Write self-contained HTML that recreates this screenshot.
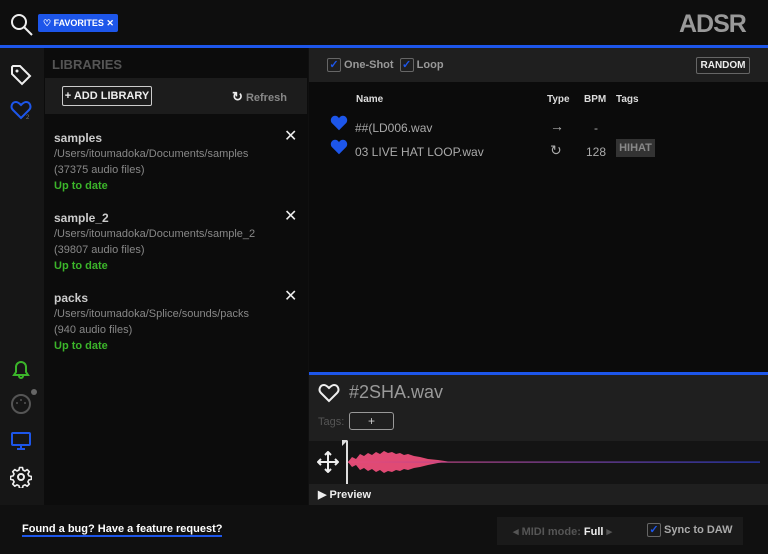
<!DOCTYPE html><html><head><style>
*{margin:0;padding:0;box-sizing:border-box}
body{width:768px;height:554px;background:#101010;font-family:"Liberation Sans",sans-serif;position:relative;overflow:hidden;color:#ddd}
.a{position:absolute;white-space:nowrap}
.b{font-weight:bold}
.cb{display:inline-block;width:14px;height:14px;border:1px solid #666;border-radius:2px;color:#1d56ea;text-align:center;font-size:11px;line-height:12px;vertical-align:middle}
</style></head><body>
<div class="a" style="left:0;top:0;width:768px;height:45px;background:#0e0e0e"></div>
<div class="a" style="left:0;top:45px;width:768px;height:3px;background:#1d56ea"></div>
<svg class="a" style="left:10px;top:13px" width="24" height="24" viewBox="0 0 24 24"><circle cx="9" cy="9" r="7" fill="none" stroke="#eee" stroke-width="2"/><path d="M14 14l8 8" stroke="#eee" stroke-width="2"/></svg>
<div class="a b" style="left:38px;top:14px;width:80px;height:18px;background:#1d56ea;border-radius:2px;color:#fff;font-size:9px;line-height:18px;padding-left:5px">♡ FAVORITES ✕</div>
<div class="a b" style="left:679px;top:10px;font-size:25px;color:#999;letter-spacing:-1px">ADSR</div>
<!-- left rail -->
<div class="a" style="left:0;top:48px;width:44px;height:457px;background:#161616"></div>
<svg class="a" style="left:10px;top:64px" width="22" height="22" viewBox="0 0 22 22"><path d="M2 3v7l10 10 8-8L10 2H3z" fill="none" stroke="#eee" stroke-width="2"/><circle cx="7" cy="7" r="1.5" fill="#eee"/></svg>
<svg class="a" style="left:10px;top:100px" width="22" height="20" viewBox="0 0 22 20"><path d="M11 18L3 10C0 7 2 2 6 2c2 0 4 2 5 3 1-1 3-3 5-3 4 0 6 5 3 8z" fill="none" stroke="#1d56ea" stroke-width="2"/></svg>
<div class="a" style="left:26px;top:115px;font-size:6px;color:#777">2</div>
<svg class="a" style="left:10px;top:358px" width="22" height="22" viewBox="0 0 22 22"><path d="M4 17h14l-2-3V9a5 5 0 0 0-10 0v5z M9 18a2 2 0 0 0 4 0" fill="none" stroke="#3bb52a" stroke-width="2"/></svg>
<svg class="a" style="left:10px;top:393px" width="22" height="22"><circle cx="11" cy="11" r="9" fill="none" stroke="#555" stroke-width="2"/><circle cx="7" cy="10" r="1" fill="#555"/><circle cx="11" cy="7" r="1" fill="#555"/><circle cx="15" cy="10" r="1" fill="#555"/></svg>
<div class="a" style="left:31px;top:389px;width:6px;height:6px;border-radius:3px;background:#666"></div>
<svg class="a" style="left:10px;top:431px" width="22" height="20" viewBox="0 0 22 20"><rect x="2" y="2" width="18" height="12" rx="1" fill="none" stroke="#1d56ea" stroke-width="2"/><path d="M11 14v3M7 18h8" stroke="#1d56ea" stroke-width="2"/></svg>
<svg class="a" style="left:10px;top:466px" width="22" height="22" viewBox="0 0 22 22"><circle cx="11" cy="11" r="3" fill="none" stroke="#eee" stroke-width="2"/><path d="M9.5 1.5h3l.5 2.5 2 1 2.2-1.4 2.1 2.1-1.4 2.2 1 2 2.5.5v3l-2.5.5-1 2 1.4 2.2-2.1 2.1-2.2-1.4-2 1-.5 2.5h-3l-.5-2.5-2-1-2.2 1.4-2.1-2.1 1.4-2.2-1-2-2.5-.5v-3l2.5-.5 1-2-1.4-2.2 2.1-2.1 2.2 1.4 2-1z" fill="none" stroke="#eee" stroke-width="1.6" stroke-linejoin="round"/></svg>
<!-- libraries -->
<div class="a" style="left:44px;top:48px;width:264px;height:457px;background:#0c0c0c"></div>
<div class="a b" style="left:52px;top:57px;font-size:13px;color:#555">LIBRARIES</div>
<div class="a" style="left:45px;top:78px;width:262px;height:36px;background:#1c1c1c"></div>
<div class="a b" style="left:62px;top:86px;width:90px;height:20px;border:1px solid #ccc;border-radius:2px;font-size:11px;line-height:18px;color:#eee;text-align:center">+ ADD LIBRARY</div>
<div class="a b" style="left:232px;top:89px;font-size:11px;color:#888"><span style="color:#eee;font-size:13px">↻</span> Refresh</div>
<div class="a" style="left:54px;top:130px;font-size:11px;line-height:16px;color:#888">
<div class="b" style="color:#ccc;font-size:12px">samples</div><div>/Users/itoumadoka/Documents/samples</div><div>(37375 audio files)</div><div class="b" style="color:#3bb52a">Up to date</div>
<div class="b" style="color:#ccc;margin-top:16px;font-size:12px">sample_2</div><div>/Users/itoumadoka/Documents/sample_2</div><div>(39807 audio files)</div><div class="b" style="color:#3bb52a">Up to date</div>
<div class="b" style="color:#ccc;margin-top:16px;font-size:12px">packs</div><div>/Users/itoumadoka/Splice/sounds/packs</div><div>(940 audio files)</div><div class="b" style="color:#3bb52a">Up to date</div></div>
<div class="a" style="left:284px;top:126px;font-size:16px;color:#eee">✕</div>
<div class="a" style="left:284px;top:206px;font-size:16px;color:#eee">✕</div>
<div class="a" style="left:284px;top:286px;font-size:16px;color:#eee">✕</div>
<!-- right -->
<div class="a" style="left:309px;top:48px;width:459px;height:34px;background:#1f1f1f"></div>
<div class="a" style="left:309px;top:82px;width:459px;height:290px;background:#0b0b0b"></div>
<div class="a b" style="left:327px;top:58px;font-size:11px;color:#999;line-height:14px"><span class="cb">✓</span> One-Shot <span class="cb" style="margin-left:3px">✓</span> Loop</div>
<div class="a b" style="left:696px;top:57px;width:54px;height:17px;border:1px solid #666;border-radius:2px;font-size:10px;line-height:15px;text-align:center;color:#eee">RANDOM</div>
<div class="a b" style="left:356px;top:94px;font-size:10px;color:#ddd">Name</div>
<div class="a b" style="left:547px;top:94px;font-size:10px;color:#ddd">Type</div>
<div class="a b" style="left:584px;top:94px;font-size:10px;color:#ddd">BPM</div>
<div class="a b" style="left:616px;top:94px;font-size:10px;color:#ddd">Tags</div>
<svg class="a" style="left:330px;top:115px" width="18" height="16" viewBox="0 0 22 20"><path d="M11 19L2 10C-1 6 2 1 6 1c2 0 4 1 5 3 1-2 3-3 5-3 4 0 7 5 4 9z" fill="#1d56ea"/></svg>
<svg class="a" style="left:330px;top:139px" width="18" height="16" viewBox="0 0 22 20"><path d="M11 19L2 10C-1 6 2 1 6 1c2 0 4 1 5 3 1-2 3-3 5-3 4 0 7 5 4 9z" fill="#1d56ea"/></svg>
<div class="a" style="left:355px;top:116px;font-size:12px;color:#aaa;line-height:24px">##(LD006.wav<br>03 LIVE HAT LOOP.wav</div>
<div class="a" style="left:550px;top:114px;font-size:14px;color:#aaa;line-height:24px">→<br>↻</div>
<div class="a" style="left:584px;top:116px;font-size:12px;color:#aaa;line-height:24px;width:24px;text-align:center">-<br>128</div>
<div class="a b" style="left:616px;top:139px;width:39px;height:18px;background:#333;font-size:11px;line-height:18px;color:#888;text-align:center">HIHAT</div>
<div class="a" style="left:309px;top:372px;width:459px;height:3px;background:#1d56ea"></div>
<div class="a" style="left:309px;top:375px;width:459px;height:130px;background:#1f1f1f"></div>
<svg class="a" style="left:318px;top:383px" width="22" height="20" viewBox="0 0 22 20"><path d="M11 18L3 10C0 7 2 2 6 2c2 0 4 2 5 3 1-1 3-3 5-3 4 0 6 5 3 8z" fill="none" stroke="#eee" stroke-width="2"/></svg>
<div class="a" style="left:349px;top:382px;font-size:18px;color:#999">#2SHA.wav</div>
<div class="a" style="left:318px;top:416px;font-size:11px;color:#555">Tags:</div>
<div class="a" style="left:349px;top:412px;width:45px;height:18px;border:1px solid #999;border-radius:3px;text-align:center;font-size:12px;line-height:16px;color:#ccc">+</div>
<div class="a" style="left:309px;top:441px;width:459px;height:43px;background:#141414"></div>
<svg class="a" style="left:317px;top:451px" width="22" height="22" viewBox="0 0 22 22"><path d="M11 1v20M1 11h20M8 4l3-3 3 3M8 18l3 3 3-3M4 8l-3 3 3 3M18 8l3 3-3 3" fill="none" stroke="#eee" stroke-width="2"/></svg>
<div class="a" style="left:346px;top:441px;width:2px;height:43px;background:#ddd"></div>
<div class="a" style="left:342px;top:440px;width:0;height:0;border-left:6px solid #ddd;border-bottom:6px solid transparent"></div>
<svg class="a" style="left:348px;top:448px" width="412" height="30"><defs><linearGradient id="g"><stop offset="0" stop-color="#e84a78"/><stop offset="1" stop-color="#2a3cc8"/></linearGradient></defs><path d="M0 14L4 9 8 11 12 6 16 8 20 5 24 7 28 4 32 6 36 3 40 5 44 4 48 6 52 5 56 7 60 6 66 8 72 9 80 11 90 12 100 13.5 90 15 80 17 72 19 66 20 60 22 56 21 52 23 48 22 44 24 40 23 36 25 32 22 28 24 24 21 20 23 16 20 12 22 8 17 4 19z" fill="#e04a74"/><rect x="0" y="13.5" width="412" height="1.2" fill="url(#g)"/></svg>
<div class="a b" style="left:318px;top:488px;font-size:11px;color:#eee">▶ Preview</div>
<div class="a b" style="left:22px;top:523px;font-size:11px;color:#fff;border-bottom:2px solid #1d56ea;line-height:12px">Found a bug? Have a feature request?</div>
<div class="a" style="left:497px;top:517px;width:246px;height:28px;background:#1a1a1a"></div>
<div class="a b" style="left:513px;top:525px;font-size:11px;color:#555">◂ MIDI mode: <span style="color:#eee">Full</span> ▸</div>
<div class="a b" style="left:647px;top:523px;font-size:11px;color:#aaa;line-height:14px"><span class="cb">✓</span> Sync to DAW</div>
</body></html>
